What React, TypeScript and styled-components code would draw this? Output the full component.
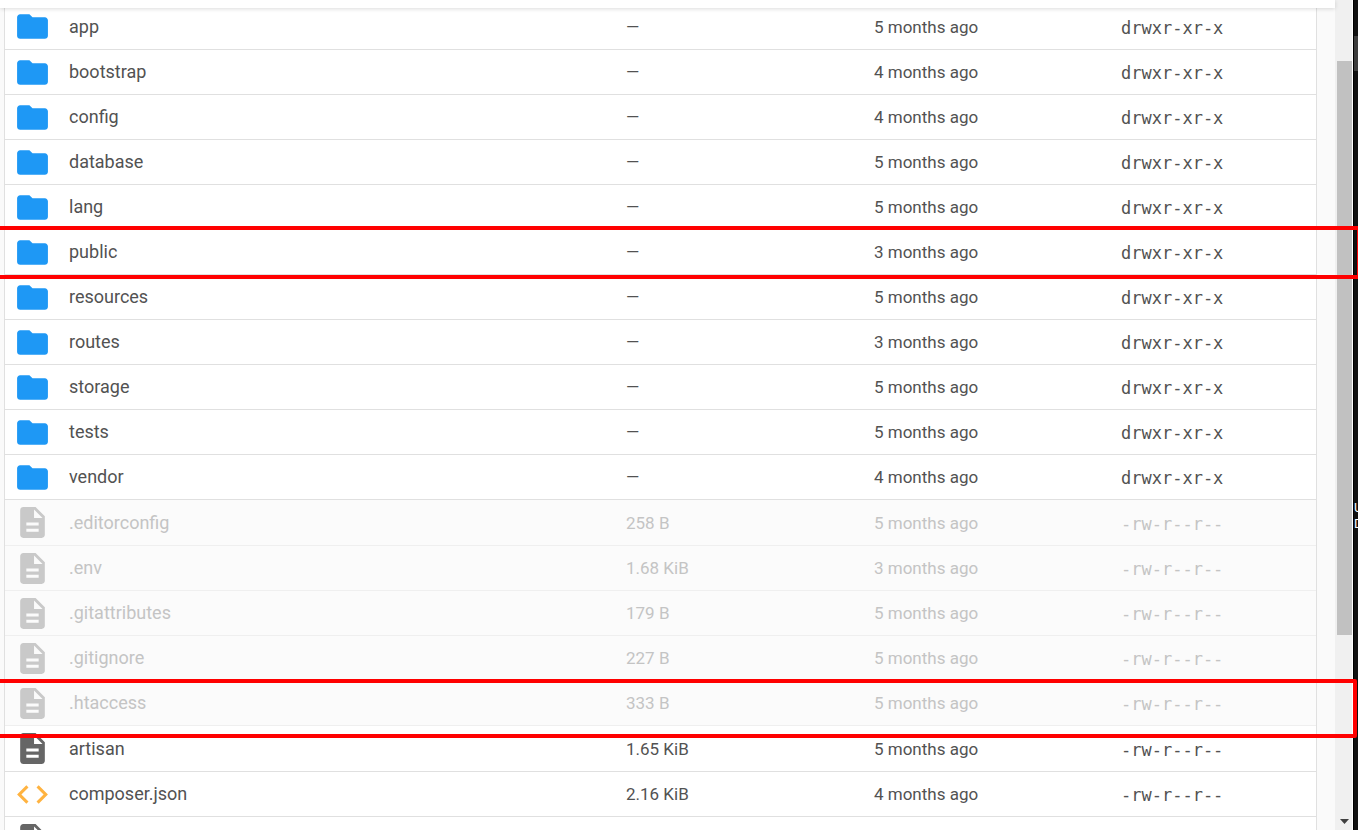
import React from "react";
import styled, { createGlobalStyle } from "styled-components";

const GlobalStyle = createGlobalStyle`
  *, *::before, *::after { box-sizing: border-box; }
  body { margin: 0; background: #fafafa; font-family: Roboto, "Liberation Sans", sans-serif; }
`;

const Page = styled.div`
  position: relative;
  display: flex;
  height: 100vh;
  overflow: hidden;
`;

const Pane = styled.main`
  flex: 1;
  min-width: 0;
  display: flex;
  flex-direction: column;
  background: #fafafa;
`;

const TopBar = styled.header`
  flex: none;
  position: relative;
  z-index: 1;
  height: 8px;
  background: #fff;
  box-shadow: 0 1px 4px rgba(0, 0, 0, 0.14);
`;

const Listing = styled.section`
  flex: 1;
  min-height: 0;
  display: flex;
  flex-direction: column;
  overflow: hidden;
  padding: 0 18px 0 4px;
`;

const Card = styled.div`
  flex: none;
  margin-top: -4px;
  border: solid #e0e0e0;
  border-width: 0 1px;
  background: #fff;
`;

const FileTable = styled.table`
  width: 100%;
  table-layout: fixed;
  border-spacing: 0;
`;

const Column = styled.col<{ $width?: number }>`
  width: ${(p) => (p.$width ? `${p.$width}px` : "auto")};
`;

const Group = styled.tbody<{ $muted?: boolean }>`
  color: ${(p) => (p.$muted ? "#c4c4c4" : "#525252")};
  background: ${(p) => (p.$muted ? "#fbfbfb" : "#fff")};
  --file-icon: ${(p) => (p.$muted ? "#c9c9c9" : "#666")};
  --divider: ${(p) => (p.$muted ? "#efefef" : "#e0e0e0")};
`;

const Row = styled.tr`
  height: 45px;

  &:first-child {
    height: 46px;
  }
`;

const Cell = styled.td`
  padding: 0;
  border-bottom: 1px solid var(--divider);
  font-size: 17px;
  line-height: 24px;
  white-space: nowrap;
`;

const IconCell = styled(Cell)`
  padding-left: 9px;
`;

const NameCell = styled(Cell)`
  font-size: 18px;
`;

const ModeCell = styled(Cell)`
  padding-top: 2px;
  font-family: "DejaVu Sans Mono", monospace;
  font-size: 17px;
`;

const Icon = styled.svg<{ $kind: Kind }>`
  display: block;
  width: 37px;
  height: 37px;
  fill: ${(p) =>
    p.$kind === "folder" ? "#1e98f5" : p.$kind === "code" ? "#ffb340" : "var(--file-icon)"};
`;

const ScrollTrack = styled.div`
  flex: none;
  width: 18px;
  display: grid;
  grid-template-rows: 61fr 574fr 195fr;
  padding: 0 0 0 2px;
  background: #f0f0f0;
  border-right: 1px solid #fff;
`;

const ScrollThumb = styled.div`
  grid-row: 2;
  background: #c1c1c1;
`;

const ScrollArrow = styled.svg`
  grid-row: 3;
  align-self: end;
  justify-self: center;
  width: 9px;
  height: 5px;
  margin-bottom: 6px;
  fill: #404040;
`;

const Desktop = styled.aside`
  flex: none;
  width: 5px;
  overflow: hidden;
  display: flex;
  flex-direction: column;
  background: #111;
  border-left: 1px solid #000;
  color: #fff;
  font-size: 13px;
  line-height: 16px;
`;

const DesktopTab = styled.div`
  flex: none;
  height: 35px;
  margin: 36px 0 429px;
  background: #3c3c3c;
`;

const Marker = styled.div<{ $top: number; $height: number; $right: number }>`
  position: absolute;
  z-index: 2;
  top: ${(p) => p.$top}px;
  left: -8px;
  right: ${(p) => p.$right}px;
  height: ${(p) => p.$height}px;
  border: 4px solid #f00;
  border-radius: 2px;
  pointer-events: none;
`;

type Kind = "folder" | "file" | "code";

interface Entry {
  kind: Kind;
  name: string;
  size: string;
  age: string;
  mode: string;
}

const paths: Record<Kind, string> = {
  folder:
    "M10 4H4c-1.1 0-1.99.9-1.99 2L2 18c0 1.1.9 2 2 2h16c1.1 0 2-.9 2-2V8c0-1.1-.9-2-2-2h-8l-2-2z",
  file: "M14 2H6c-1.1 0-1.99.9-1.99 2L4 20c0 1.1.89 2 1.99 2H18c1.1 0 2-.9 2-2V8l-6-6zm2 16H8v-2h8v2zm0-4H8v-2h8v2zm-3-5V3.5L18.5 9H13z",
  code: "M9.4 16.6L4.8 12l4.6-4.6L8 6l-6 6 6 6 1.4-1.4zm5.2 0l4.6-4.6-4.6-4.6L16 6l6 6-6 6-1.4-1.4z",
};

const folder = (name: string, months: number): Entry => ({
  kind: "folder",
  name,
  size: "—",
  age: `${months} months ago`,
  mode: "drwxr-xr-x",
});

const file = (name: string, size: string, months: number, kind: Kind = "file"): Entry => ({
  kind,
  name,
  size,
  age: `${months} months ago`,
  mode: "-rw-r--r--",
});

const folders = [
  folder("app", 5),
  folder("bootstrap", 4),
  folder("config", 4),
  folder("database", 5),
  folder("lang", 5),
  folder("public", 3),
  folder("resources", 5),
  folder("routes", 3),
  folder("storage", 5),
  folder("tests", 5),
  folder("vendor", 4),
];

const hiddenFiles = [
  file(".editorconfig", "258 B", 5),
  file(".env", "1.68 KiB", 3),
  file(".gitattributes", "179 B", 5),
  file(".gitignore", "227 B", 5),
  file(".htaccess", "333 B", 5),
];

const files: Entry[] = [
  file("artisan", "1.65 KiB", 5),
  file("composer.json", "2.16 KiB", 4, "code"),
  { kind: "file", name: "", size: "", age: "", mode: "" },
];

function Rows({ entries }: { entries: Entry[] }) {
  return (
    <>
      {entries.map((e) => (
        <Row key={e.name}>
          <IconCell>
            <Icon $kind={e.kind} viewBox="0 0 24 24" aria-hidden="true">
              <path d={paths[e.kind]} />
            </Icon>
          </IconCell>
          <NameCell>{e.name}</NameCell>
          <Cell>{e.size}</Cell>
          <Cell>{e.age}</Cell>
          <ModeCell>{e.mode}</ModeCell>
        </Row>
      ))}
    </>
  );
}

export default function App() {
  return (
    <>
      <GlobalStyle />
      <Page>
        <Pane>
          <TopBar />
          <Listing>
            <Card>
              <FileTable>
                <colgroup>
                  <Column $width={64} />
                  <Column />
                  <Column $width={248} />
                  <Column $width={247} />
                  <Column $width={195} />
                </colgroup>
                <Group>
                  <Rows entries={folders} />
                </Group>
                <Group $muted>
                  <Rows entries={hiddenFiles} />
                </Group>
                <Group>
                  <Rows entries={files} />
                </Group>
              </FileTable>
            </Card>
          </Listing>
        </Pane>
        <ScrollTrack>
          <ScrollThumb />
          <ScrollArrow viewBox="0 0 9 5" aria-hidden="true">
            <path d="M0 0h9L4.500 5z" />
          </ScrollArrow>
        </ScrollTrack>
        <Desktop>
          <DesktopTab />
          <span>U</span>
          <span>D</span>
        </Desktop>
        <Marker $top={226} $height={53} $right={-3} />
        <Marker $top={679} $height={59} $right={1} />
      </Page>
    </>
  );
}
